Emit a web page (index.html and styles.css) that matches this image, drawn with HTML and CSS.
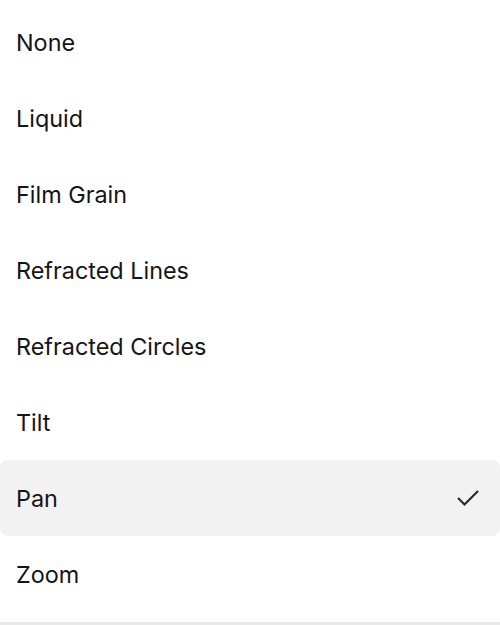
FILE: index.html
```html
<!DOCTYPE html>
<html>
<head>
<meta charset="utf-8">
<link rel="stylesheet" href="styles.css">
</head>
<body>
<ul class="menu">
  <li class="item">None</li>
  <li class="item">Liquid</li>
  <li class="item">Film Grain</li>
  <li class="item">Refracted Lines</li>
  <li class="item">Refracted Circles</li>
  <li class="item">Tilt</li>
  <li class="item selected">Pan
    <svg class="check" width="24" height="20" viewBox="0 0 24 20"><path d="M2 10 L8.5 16.5 L22 3" fill="none" stroke="#2b2b2b" stroke-width="2.2"/></svg>
  </li>
  <li class="item">Zoom</li>
</ul>
<div class="divider"></div>
</body>
</html>
```
FILE: styles.css
```css
html, body {
  margin: 0;
  padding: 0;
  background: #ffffff;
}
body {
  width: 500px;
  height: 625px;
  overflow: hidden;
  font-family: Inter, "Noto Sans", sans-serif;
}
.menu {
  list-style: none;
  margin: 0;
  padding: 4px 0 10px 0;
}
.item {
  height: 76px;
  display: flex;
  align-items: center;
  justify-content: space-between;
  padding: 0 16px;
  font-size: 23.4px;
  color: #151515;
  border-radius: 8px;
}
.selected {
  background: #f2f2f2;
}
.check {
  margin-right: 4px;
}
.divider {
  height: 3px;
  background: #e8e8e8;
}
```
